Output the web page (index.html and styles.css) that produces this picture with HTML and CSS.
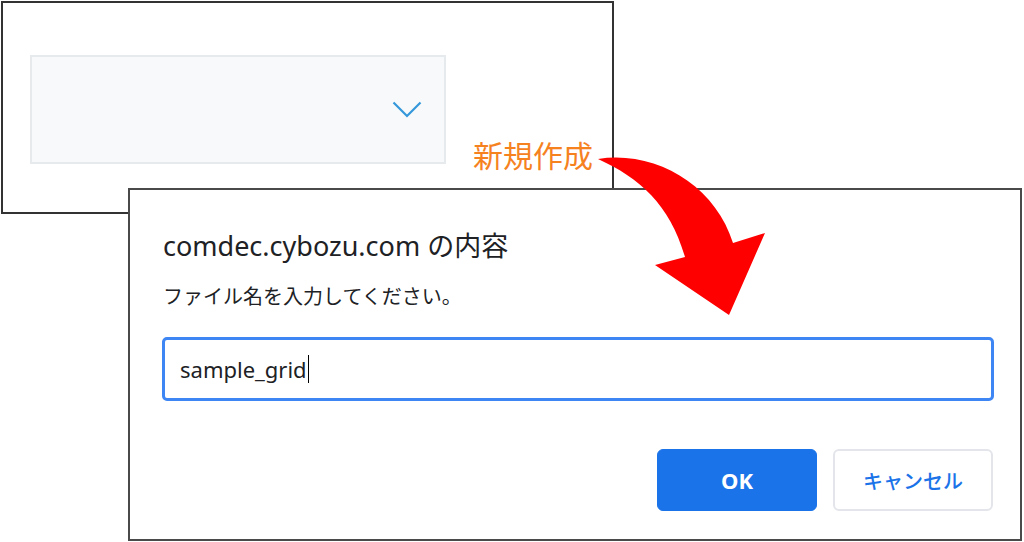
FILE: index.html
```html
<!DOCTYPE html>
<html lang="ja">
<head>
<meta charset="utf-8">
<title>新規作成</title>
<link rel="stylesheet" href="styles.css">
</head>
<body>
<div class="stage">
  <section class="back-panel">
    <div class="select-box">
      <svg class="chevron" width="30" height="17" viewBox="0 0 30 17" aria-hidden="true">
        <path d="M1.5 1.5 L15 15 L28.5 1.5" fill="none" stroke="#3498db" stroke-width="2.2"/>
      </svg>
    </div>
    <span class="new-label">新規作成</span>
  </section>

  <section class="dialog">
    <h1 class="dialog-title">comdec.cybozu.com の内容</h1>
    <p class="dialog-msg">ファイル名を入力してください。</p>
    <div class="dialog-input"><span class="input-text">sample_grid</span><span class="caret"></span></div>
    <div class="dialog-buttons">
      <button class="btn btn-ok">OK</button>
      <button class="btn btn-cancel">キャンセル</button>
    </div>
  </section>

  <svg class="arrow" width="1024" height="542" viewBox="0 0 1024 542" aria-hidden="true">
    <path d="M598 159 C 655 150 715 185 733 243 L 765 233 L 729 315 L 655 265 L 685 257 C 670 205 640 178 598 159 Z" fill="#ff0000"/>
  </svg>
</div>
</body>
</html>
```

FILE: styles.css
```css
* { box-sizing: border-box; }

html, body {
  margin: 0;
  padding: 0;
  background: #ffffff;
}

body {
  font-family: "Noto Sans", "Noto Sans CJK JP", sans-serif;
  width: 1024px;
  height: 542px;
  overflow: hidden;
}

.stage {
  position: relative;
  width: 1024px;
  height: 542px;
  padding: 1px 0 0 1px;
}

.back-panel {
  width: 613px;
  height: 213px;
  border: 2px solid #333333;
  background: #ffffff;
  display: flex;
  align-items: flex-start;
  padding: 52px 0 0 27px;
}

.select-box {
  width: 416px;
  height: 109px;
  background: #f7f9fa;
  border: 2px solid #e6eaec;
  display: flex;
  align-items: center;
  justify-content: flex-end;
  padding: 0 22px 0 0;
}

.chevron {
  display: block;
}

.new-label {
  margin: 79px 0 0 27px;
  font-size: 30px;
  line-height: 40px;
  color: #f5821f;
  font-family: "Noto Sans CJK JP", sans-serif;
  white-space: nowrap;
}

.dialog {
  position: absolute;
  left: 128px;
  top: 188px;
  width: 894px;
  height: 353px;
  border: 2px solid #4a4a4a;
  background: #ffffff;
  display: flex;
  flex-direction: column;
  padding: 40px 26px 26px 33px;
}

.dialog-title {
  margin: 0;
  font-size: 27px;
  line-height: 32px;
  font-weight: 400;
  color: #202124;
}

.dialog-title .jp {
  font-size: 28px;
}

.dialog-msg {
  margin: 22px 0 0 0;
  font-size: 20px;
  line-height: 26px;
  color: #202124;
}

.dialog-input {
  margin: 27px 0 0 -1px;
  height: 64px;
  border: 3px solid #3d86f4;
  border-radius: 5px;
  display: flex;
  align-items: center;
  padding: 0 0 0 15px;
  font-size: 22px;
  color: #202124;
}

.caret {
  display: inline-block;
  width: 1.5px;
  height: 28px;
  background: #000000;
  margin-left: 1px;
}

.dialog-buttons {
  margin-top: 48px;
  display: flex;
  justify-content: flex-end;
  gap: 16px;
  padding-right: 1px;
}

.btn {
  width: 160px;
  height: 62px;
  border-radius: 6px;
  font-family: "Noto Sans", "Noto Sans CJK JP", sans-serif;
  font-size: 22px;
  padding: 0;
}

.btn-ok {
  background: #1a73e8;
  border: 1px solid #1a73e8;
  color: #ffffff;
  font-weight: 700;
}

.btn-cancel {
  background: #ffffff;
  border: 2px solid #e3e5ea;
  color: #1a73e8;
  font-weight: 500;
  font-size: 20px;
}

.arrow {
  position: absolute;
  left: 0;
  top: 0;
  pointer-events: none;
}
```
